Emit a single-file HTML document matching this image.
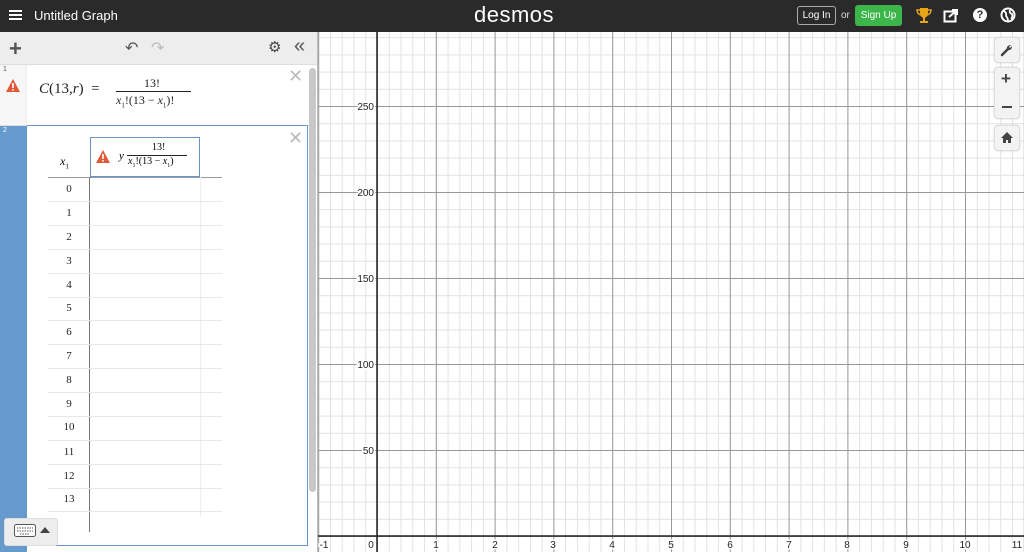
<!DOCTYPE html>
<html><head><meta charset="utf-8"><style>
*{margin:0;padding:0;box-sizing:border-box}
body{width:1024px;height:552px;overflow:hidden;font-family:"Liberation Sans",sans-serif;background:#fff;position:relative}
.top{position:absolute;left:0;top:0;width:1024px;height:32px;background:#2a2a2a;color:#fff}
.abs{position:absolute}
.serif{font-family:"Liberation Serif",serif}
.tb{position:absolute;left:0;top:32px;width:318px;height:33px;background:#ededed;border-bottom:1px solid #ddd}
.rowline{position:absolute;left:48px;width:174px;height:1px;background:#e8e8e8}
.num{position:absolute;left:48px;width:42px;text-align:center;font-family:"Liberation Serif",serif;font-size:11px;color:#222}
.gbtn{position:absolute;background:#f3f3f3;border:1px solid #ddd;border-radius:4px;box-shadow:0 0 2px rgba(0,0,0,.15)}
</style></head><body>
<div class="top">
  <div class="abs" style="left:9px;top:10px;width:13px;height:2px;background:#fff;box-shadow:0 4px 0 #fff,0 8px 0 #fff"></div>
  <div class="abs" style="left:34px;top:8px;font-size:13px">Untitled Graph</div>
  <div class="abs" style="left:474px;top:2px;font-size:22px;letter-spacing:0.5px">desmos</div>
  <div class="abs" style="left:797px;top:6px;width:39px;height:19px;border:1px solid #aaa;border-radius:3px;font-size:10px;text-align:center;line-height:17px">Log In</div>
  <div class="abs" style="left:841px;top:10px;font-size:10px;color:#ddd">or</div>
  <div class="abs" style="left:855px;top:5px;width:47px;height:21px;background:#3cb54a;border-radius:3px;font-size:10px;text-align:center;line-height:21px">Sign Up</div>
  <svg class="abs" style="left:916px;top:7px" width="16" height="17"><path d="M4 1 H12 V6 Q12 10 8 11 Q4 10 4 6 Z" fill="#e8a317"/><path d="M4 3 H1 Q1 7 5 8 M12 3 H15 Q15 7 11 8" stroke="#e8a317" stroke-width="1.5" fill="none"/><rect x="7" y="10" width="2" height="4" fill="#e8a317"/><rect x="4" y="14" width="8" height="2" fill="#e8a317"/></svg>
  <svg class="abs" style="left:943px;top:8px" width="16" height="15"><rect x="1.5" y="3.5" width="11" height="10" fill="none" stroke="#fff" stroke-width="2"/><path d="M6 9 L13 3 M9 2 H14 V7" stroke="#fff" stroke-width="2" fill="none"/></svg>
  <div class="abs" style="left:973px;top:8px;width:14px;height:14px;border-radius:50%;background:#fff;color:#2a2a2a;font-size:11px;font-weight:bold;text-align:center;line-height:14px">?</div>
  <svg class="abs" style="left:1000px;top:7px" width="16" height="16"><circle cx="8" cy="8" r="6.5" fill="none" stroke="#fff" stroke-width="2"/><path d="M4 4 Q7 6 6 9 Q8 11 8 14 M10 3 Q9 6 12 7 Q13 10 11 12" stroke="#fff" stroke-width="1.8" fill="none"/></svg>
</div>
<div class="tb">
  <div class="abs" style="left:9px;top:4px;font-size:22px;color:#555;font-weight:bold">+</div>
  <div class="abs" style="left:125px;top:6px;font-size:16px;color:#555">↶</div>
  <div class="abs" style="left:151px;top:6px;font-size:16px;color:#bbb">↷</div>
  <div class="abs" style="left:268px;top:6px;font-size:15px;color:#444">⚙</div>
  <div class="abs" style="left:294px;top:3px;font-size:20px;color:#555">«</div>
</div>
<!-- expr 1 -->
<div class="abs" style="left:0;top:65px;width:27px;height:60px;background:#f6f6f6;border-right:1px solid #eee"></div>
<div class="abs" style="left:3px;top:66px;font-size:7px;color:#555">1</div>
<svg class="abs" style="left:5px;top:78px" width="16" height="15"><path d="M8 1 L15 14 H1 Z" fill="#e05a3a"/><rect x="7.2" y="5" width="1.6" height="5" fill="#fff"/><rect x="7.2" y="11" width="1.6" height="1.6" fill="#fff"/></svg>
<div class="abs" style="left:288px;top:66px;font-size:18px;color:#bbb">✕</div>
<div class="abs serif" style="left:39px;top:81px;font-size:15px;font-style:italic;color:#222">C<span style="font-style:normal">(13,</span>r<span style="font-style:normal">)</span> &nbsp;<span style="font-style:normal">=</span></div>
<div class="abs serif" style="left:144px;top:76px;font-size:12px;color:#222">13!</div>
<div class="abs" style="left:116px;top:91px;width:75px;height:1px;background:#222"></div>
<div class="abs serif" style="left:116px;top:93px;font-size:12px;color:#222"><i>x</i><sub style="font-size:7px">1</sub>!(13 − <i>x</i><sub style="font-size:7px">1</sub>)!</div>
<div class="abs" style="left:0;top:125px;width:310px;height:1px;background:#ddd"></div>
<!-- expr 2 -->
<div class="abs" style="left:0;top:126px;width:27px;height:426px;background:#6699cc"></div>
<div class="abs" style="left:3px;top:127px;font-size:7px;color:#fff">2</div>
<div class="abs" style="left:27px;top:125px;width:281px;height:421px;border:1px solid #6a95c8;border-left:none"></div>
<div class="abs" style="left:288px;top:128px;font-size:18px;color:#bbb">✕</div>
<div class="abs serif" style="left:60px;top:154px;font-size:12px;font-style:italic">x<sub style="font-size:7px;font-style:normal">1</sub></div>
<div class="abs" style="left:90px;top:137px;width:110px;height:40px;border:1px solid #6a95c8"></div>
<svg class="abs" style="left:95px;top:149px" width="16" height="15"><path d="M8 1 L15 14 H1 Z" fill="#e05a3a"/><rect x="7.2" y="5" width="1.6" height="5" fill="#fff"/><rect x="7.2" y="11" width="1.6" height="1.6" fill="#fff"/></svg>
<div class="abs serif" style="left:119px;top:150px;font-size:11px;font-style:italic">y</div>
<div class="abs serif" style="left:152px;top:142px;font-size:10px">13!</div>
<div class="abs" style="left:127px;top:155px;width:60px;height:1px;background:#222"></div>
<div class="abs serif" style="left:128px;top:156px;font-size:10px"><i>x</i><sub style="font-size:6px">1</sub>!(13 − <i>x</i><sub style="font-size:6px">1</sub>)</div>
<div class="abs" style="left:48px;top:177px;width:174px;height:1px;background:#999"></div>
<div class="abs" style="left:89px;top:177px;width:1px;height:355px;background:#777"></div>
<div class="abs" style="left:200px;top:177px;width:1px;height:340px;background:#eee"></div>
<div class="num" style="top:183px">0</div><div class="rowline" style="top:201px"></div>
<div class="num" style="top:207px">1</div><div class="rowline" style="top:225px"></div>
<div class="num" style="top:231px">2</div><div class="rowline" style="top:249px"></div>
<div class="num" style="top:255px">3</div><div class="rowline" style="top:273px"></div>
<div class="num" style="top:279px">4</div><div class="rowline" style="top:297px"></div>
<div class="num" style="top:302px">5</div><div class="rowline" style="top:320px"></div>
<div class="num" style="top:326px">6</div><div class="rowline" style="top:344px"></div>
<div class="num" style="top:350px">7</div><div class="rowline" style="top:368px"></div>
<div class="num" style="top:374px">8</div><div class="rowline" style="top:392px"></div>
<div class="num" style="top:398px">9</div><div class="rowline" style="top:416px"></div>
<div class="num" style="top:421px">10</div><div class="rowline" style="top:440px"></div>
<div class="num" style="top:446px">11</div><div class="rowline" style="top:464px"></div>
<div class="num" style="top:470px">12</div><div class="rowline" style="top:488px"></div>
<div class="num" style="top:493px">13</div><div class="rowline" style="top:511px"></div>
<!-- scrollbar -->
<div class="abs" style="left:309px;top:68px;width:7px;height:424px;background:#c8c8c8;border-radius:4px"></div>
<div class="abs" style="left:317px;top:32px;width:1px;height:520px;background:#bbb"></div>
<!-- keyboard -->
<div class="abs" style="left:4px;top:518px;width:54px;height:28px;background:#ededed;border:1px solid #ddd;border-radius:3px"></div>
<svg class="abs" style="left:14px;top:524px" width="22" height="14"><rect x="0.5" y="0.5" width="21" height="12" rx="2" fill="#fff" stroke="#555"/><path d="M3 4 H19 M3 7 H19 M6 10 H16" stroke="#777" stroke-width="1.2" stroke-dasharray="1.5 1"/></svg>
<div class="abs" style="left:40px;top:527px;width:0;height:0;border-left:5px solid transparent;border-right:5px solid transparent;border-bottom:6px solid #444"></div>
<!-- graph -->
<svg class="abs" style="left:318px;top:32px" width="706" height="520">
<defs>
<pattern id="mi" patternUnits="userSpaceOnUse" width="11.76" height="17.2" x="59" y="504"><path d="M0.5 0 V17.2 M0 0.5 H11.76" stroke="#e2e2e2" stroke-width="1" fill="none"/></pattern>
<pattern id="ma" patternUnits="userSpaceOnUse" width="58.8" height="86" x="59" y="504"><path d="M0.5 0 V86 M0 0.5 H58.8" stroke="#999" stroke-width="1" fill="none"/></pattern>
</defs>
<rect width="706" height="520" fill="url(#mi)"/>
<rect width="706" height="520" fill="url(#ma)"/>
<line x1="59" y1="0" x2="59" y2="520" stroke="#222" stroke-width="1.5"/>
<line x1="0" y1="504" x2="706" y2="504" stroke="#222" stroke-width="1.5"/>
<g font-family="Liberation Sans" font-size="10" fill="#222" text-anchor="middle" stroke="#fff" stroke-width="3" paint-order="stroke">
<text x="6" y="516">-1</text><text x="53" y="516">0</text>
<text x="118" y="516">1</text><text x="177" y="516">2</text><text x="235" y="516">3</text>
<text x="294" y="516">4</text><text x="353" y="516">5</text><text x="412" y="516">6</text>
<text x="471" y="516">7</text><text x="529" y="516">8</text><text x="588" y="516">9</text>
<text x="647" y="516">10</text><text x="699" y="516">11</text>
<g text-anchor="end"><text x="56" y="422">50</text><text x="56" y="336">100</text><text x="56" y="250">150</text><text x="56" y="164">200</text><text x="56" y="78">250</text></g>
</g>
</svg>
<div class="gbtn" style="left:994px;top:37px;width:26px;height:26px"></div>
<svg class="abs" style="left:1000px;top:43px" width="14" height="14"><path d="M2 12 L8 6" stroke="#444" stroke-width="2.5" stroke-linecap="round"/><path d="M7 7 Q6 2 11 2 L9 4 L10 5 L12 3 Q12 8 7 7 Z" fill="#444"/></svg>
<div class="gbtn" style="left:994px;top:67px;width:26px;height:52px"></div>
<div class="abs" style="left:1001px;top:69px;font-size:17px;color:#444;font-weight:bold">+</div>
<div class="abs" style="left:1002px;top:106px;width:10px;height:2px;background:#444"></div>
<div class="gbtn" style="left:994px;top:125px;width:26px;height:26px"></div>
<svg class="abs" style="left:1000px;top:131px" width="14" height="13"><path d="M7 1 L13 7 H11 V12 H8 V9 H6 V12 H3 V7 H1 Z" fill="#444"/></svg>
</body></html>
